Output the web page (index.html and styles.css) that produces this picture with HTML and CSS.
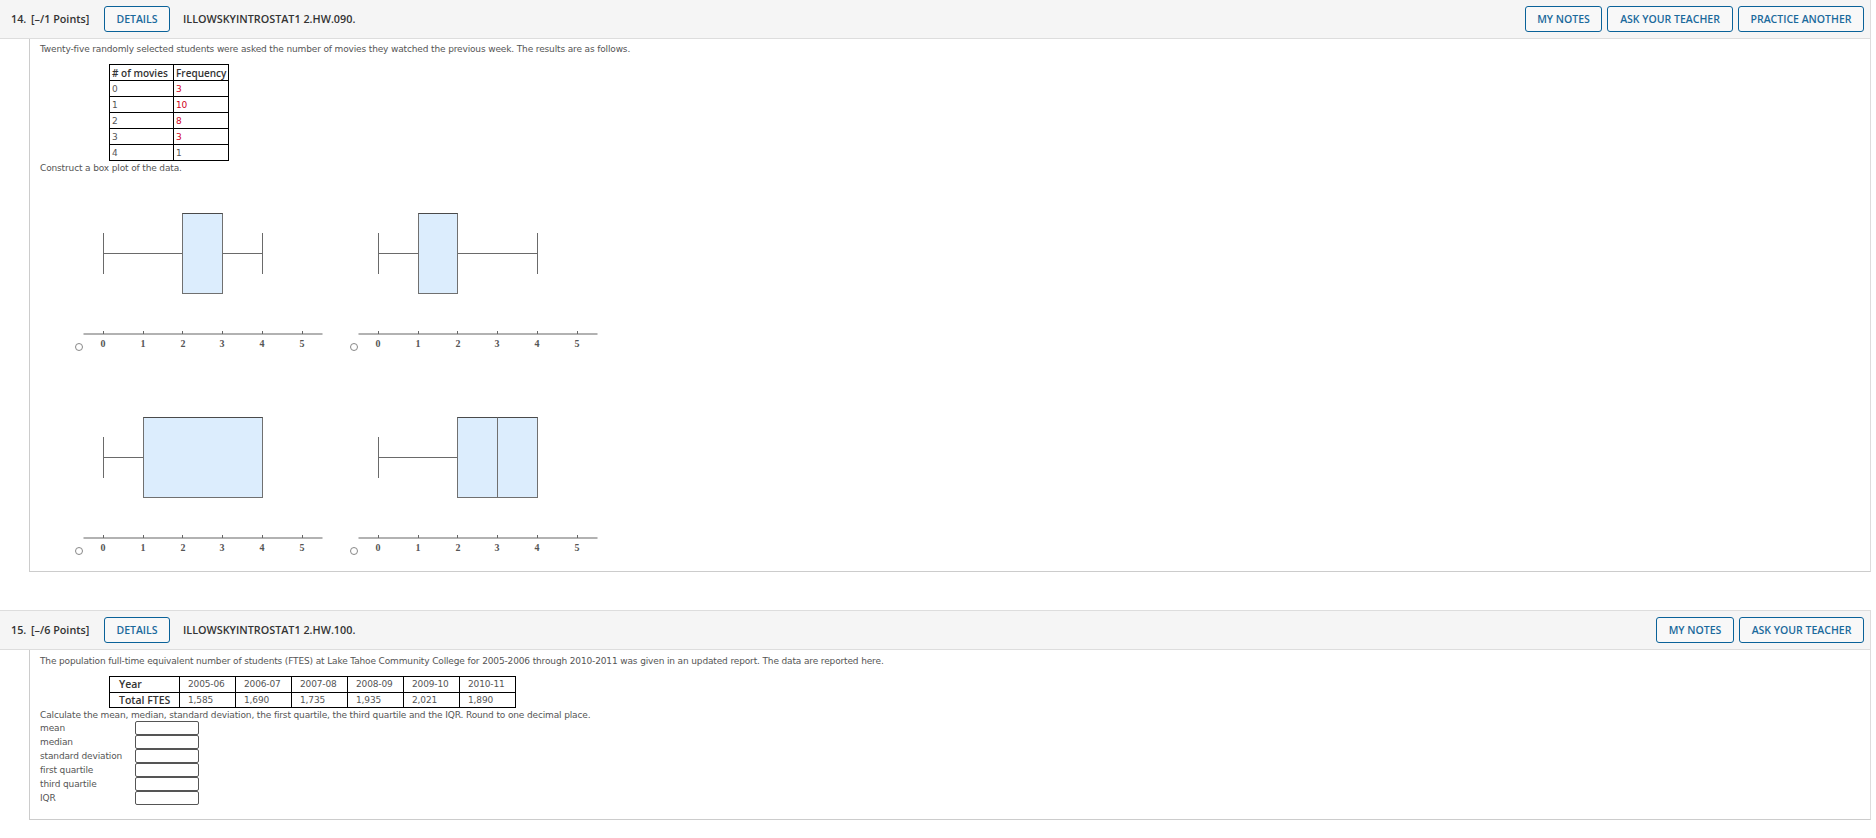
FILE: index.html
```html
<!DOCTYPE html>
<html lang="en">
<head>
<meta charset="utf-8">
<title>Homework</title>
<link rel="stylesheet" href="styles.css">
</head>
<body>
<section class="question first">
  <header class="qhead">
    <span class="qnum">14.</span>
    <span class="qpts">[–/1 Points]</span>
    <button class="btn details">DETAILS</button>
    <span class="qcode">ILLOWSKYINTROSTAT1 2.HW.090.</span>
    <div class="actions">
      <button class="btn notes">MY NOTES</button>
      <button class="btn ask">ASK YOUR TEACHER</button>
      <button class="btn practice">PRACTICE ANOTHER</button>
    </div>
  </header>
  <div class="qbody q14">
    <p class="line">Twenty-five randomly selected students were asked the number of movies they watched the previous week. The results are as follows.</p>
    <table class="data freq">
      <tr><th class="c1">#&nbsp;of movies</th><th class="c2">Frequency</th></tr>
      <tr><td>0</td><td class="red">3</td></tr>
      <tr><td>1</td><td class="red">10</td></tr>
      <tr><td>2</td><td class="red">8</td></tr>
      <tr><td>3</td><td class="red">3</td></tr>
      <tr><td>4</td><td>1</td></tr>
    </table>
    <p class="line">Construct a box plot of the data.</p>
    <div class="plots">
      <label class="option">
        <input type="radio" name="q14" class="radio">
        <svg class="plot" viewBox="0 0 240 187" width="240" height="187">
          <path class="whisker" d="M20.5 58v41M179.5 58v41M20.5 78.5h79M139.5 78.5h40"/>
          <rect class="box" x="99.5" y="38.5" width="40" height="80"/>
          <path class="edge" d="M99.5 38.5h40"/>
          <path class="axis" d="M0.5 159h239"/>
          <path class="tick" d="M20.5 156v3M60.5 156v3M99.5 156v3M139.5 156v3M179.5 156v3M219.5 156v3"/>
          <g class="nums"><text x="20" y="172">0</text><text x="60" y="172">1</text><text x="100" y="172">2</text><text x="139" y="172">3</text><text x="179" y="172">4</text><text x="219" y="172">5</text></g>
        </svg>
      </label>
      <label class="option">
        <input type="radio" name="q14" class="radio">
        <svg class="plot" viewBox="0 0 240 187" width="240" height="187">
          <path class="whisker" d="M20.5 58v41M179.5 58v41M20.5 78.5h40M99.5 78.5h80"/>
          <rect class="box" x="60.5" y="38.5" width="39" height="80"/>
          <path class="edge" d="M60.5 38.5h39"/>
          <path class="axis" d="M0.5 159h239"/>
          <path class="tick" d="M20.5 156v3M60.5 156v3M99.5 156v3M139.5 156v3M179.5 156v3M219.5 156v3"/>
          <g class="nums"><text x="20" y="172">0</text><text x="60" y="172">1</text><text x="100" y="172">2</text><text x="139" y="172">3</text><text x="179" y="172">4</text><text x="219" y="172">5</text></g>
        </svg>
      </label>
      <label class="option">
        <input type="radio" name="q14" class="radio">
        <svg class="plot" viewBox="0 0 240 187" width="240" height="187">
          <path class="whisker" d="M20.5 58v41M20.5 78.5h40"/>
          <rect class="box" x="60.5" y="38.5" width="119" height="80"/>
          <path class="edge" d="M60.5 38.5h119"/>
          <path class="axis" d="M0.5 159h239"/>
          <path class="tick" d="M20.5 156v3M60.5 156v3M99.5 156v3M139.5 156v3M179.5 156v3M219.5 156v3"/>
          <g class="nums"><text x="20" y="172">0</text><text x="60" y="172">1</text><text x="100" y="172">2</text><text x="139" y="172">3</text><text x="179" y="172">4</text><text x="219" y="172">5</text></g>
        </svg>
      </label>
      <label class="option">
        <input type="radio" name="q14" class="radio">
        <svg class="plot" viewBox="0 0 240 187" width="240" height="187">
          <path class="whisker" d="M20.5 58v41M20.5 78.5h79"/>
          <rect class="box" x="99.5" y="38.5" width="80" height="80"/>
          <path class="edge" d="M99.5 38.5h80"/>
          <path class="median" d="M139.5 38.5v80"/>
          <path class="axis" d="M0.5 159h239"/>
          <path class="tick" d="M20.5 156v3M60.5 156v3M99.5 156v3M139.5 156v3M179.5 156v3M219.5 156v3"/>
          <g class="nums"><text x="20" y="172">0</text><text x="60" y="172">1</text><text x="100" y="172">2</text><text x="139" y="172">3</text><text x="179" y="172">4</text><text x="219" y="172">5</text></g>
        </svg>
      </label>
    </div>
  </div>
</section>

<section class="question second">
  <header class="qhead">
    <span class="qnum">15.</span>
    <span class="qpts">[–/6 Points]</span>
    <button class="btn details">DETAILS</button>
    <span class="qcode">ILLOWSKYINTROSTAT1 2.HW.100.</span>
    <div class="actions">
      <button class="btn notes">MY NOTES</button>
      <button class="btn ask">ASK YOUR TEACHER</button>
    </div>
  </header>
  <div class="qbody q15">
    <p class="line">The population full-time equivalent number of students (FTES) at Lake Tahoe Community College for 2005-2006 through 2010-2011 was given in an updated report. The data are reported here.</p>
    <table class="data ftes">
      <tr><th class="lead">Year</th><td>2005-06</td><td>2006-07</td><td>2007-08</td><td>2008-09</td><td>2009-10</td><td>2010-11</td></tr>
      <tr><th class="lead">Total FTES</th><td>1,585</td><td>1,690</td><td>1,735</td><td>1,935</td><td>2,021</td><td>1,890</td></tr>
    </table>
    <p class="line">Calculate the mean, median, standard deviation, the first quartile, the third quartile and the IQR. Round to one decimal place.</p>
    <div class="answers">
      <label class="answer"><span class="alabel">mean</span><input class="ainput" type="text"></label>
      <label class="answer"><span class="alabel">median</span><input class="ainput" type="text"></label>
      <label class="answer"><span class="alabel">standard deviation</span><input class="ainput" type="text"></label>
      <label class="answer"><span class="alabel">first quartile</span><input class="ainput" type="text"></label>
      <label class="answer"><span class="alabel">third quartile</span><input class="ainput" type="text"></label>
      <label class="answer"><span class="alabel">IQR</span><input class="ainput" type="text"></label>
    </div>
  </div>
</section>
</body>
</html>
```

FILE: styles.css
```css
* { box-sizing: border-box; }

html, body { margin: 0; padding: 0; background: #fff; }

body {
  width: 1871px;
  font-family: "DejaVu Sans", sans-serif;
  font-size: 9px;
  letter-spacing: -0.14px;
  line-height: 14px;
  color: #555;
}

.question.second { margin-top: 38px; }

.qhead {
  display: flex;
  align-items: center;
  background: #f5f5f5;
  border-bottom: 1px solid #ddd;
  border-right: 1px solid #ddd;
  font-family: "Open Sans", sans-serif;
  font-size: 10.8px;
  letter-spacing: 0;
  font-weight: 600;
  color: #333;
  padding-left: 11px;
}

.first .qhead { height: 39px; }
.second .qhead { height: 40px; border-top: 1px solid #ddd; }

.qnum { width: 20px; }
.qpts { width: 73px; }

.btn {
  height: 26px;
  padding: 0;
  background: #f8f8f8;
  border: 1px solid #0a6299;
  border-radius: 3px;
  color: #1b6a9c;
  font: 600 10.5px "Open Sans", sans-serif;
}

.details { width: 66px; margin-right: 13px; }
.notes { width: 77px; }
.ask { width: 126px; }
.practice { width: 126px; }

.second .notes { width: 78px; }
.second .ask { width: 125px; }

.actions {
  display: flex;
  gap: 5px;
  margin-left: auto;
  margin-right: 6px;
}

.qbody {
  margin-left: 29px;
  padding-left: 10px;
  border-left: 1px solid #ccc;
  border-right: 1px solid #ddd;
  border-bottom: 1px solid #ccc;
}

.q14 { padding-top: 3px; padding-bottom: 5px; }
.q15 { padding-top: 4px; padding-bottom: 14px; }

.line { margin: 0; height: 14px; white-space: nowrap; }

.data {
  border-collapse: collapse;
  table-layout: fixed;
  margin-left: 69px;
  margin-top: 8px;
}

.data th, .data td {
  height: 16px;
  padding: 0 0 0 2px;
  border: 1px solid #000;
  text-align: left;
  line-height: 14px;
}

.data th { font-family: "Open Sans", sans-serif; font-size: 10px; font-weight: 600; letter-spacing: 0; color: #333; }

.freq { width: 120px; }
.freq .c1 { width: 64px; }
.red { color: #d0021b; }

.ftes { width: 407px; }
.ftes th, .ftes td { height: 15.5px; }
.ftes .lead { width: 70px; padding-left: 9px; font-size: 10.5px; }
.ftes td { width: 56px; padding-left: 8px; }

.plots {
  display: grid;
  grid-template-columns: repeat(2, 248px);
  column-gap: 27px;
  row-gap: 17px;
  margin-left: 35px;
  justify-content: start;
}

.option { display: flex; align-items: flex-start; }

.radio {
  appearance: none;
  flex: none;
  width: 8px;
  height: 8px;
  margin: 168px 0 0 0;
  background: #fff;
  border: 1px solid #888;
  border-radius: 50%;
}

.plot { display: block; flex: none; }

.whisker { fill: none; stroke: #6a6a6a; stroke-width: 1; }
.box { fill: #dcedfd; stroke: #707070; stroke-width: 1; }
.edge { fill: none; stroke: #4a4a4a; stroke-width: 1; }
.median { fill: none; stroke: #707070; stroke-width: 1; }
.axis { fill: none; stroke: #999; stroke-width: 1.5; }
.tick { fill: none; stroke: #666; stroke-width: 1; }
.nums text {
  font-family: "Liberation Serif", serif;
  font-size: 10px;
  font-weight: 700;
  letter-spacing: 0;
  fill: #555;
  text-anchor: middle;
}

.answers { display: flex; flex-direction: column; margin-top: -1px; }
.answer { display: flex; height: 14px; align-items: center; }
.alabel { width: 95px; white-space: nowrap; }
.ainput {
  width: 64px;
  height: 14px;
  padding: 0;
  background: #fff;
  border: 1px solid #555;
  border-radius: 2px;
}
```
